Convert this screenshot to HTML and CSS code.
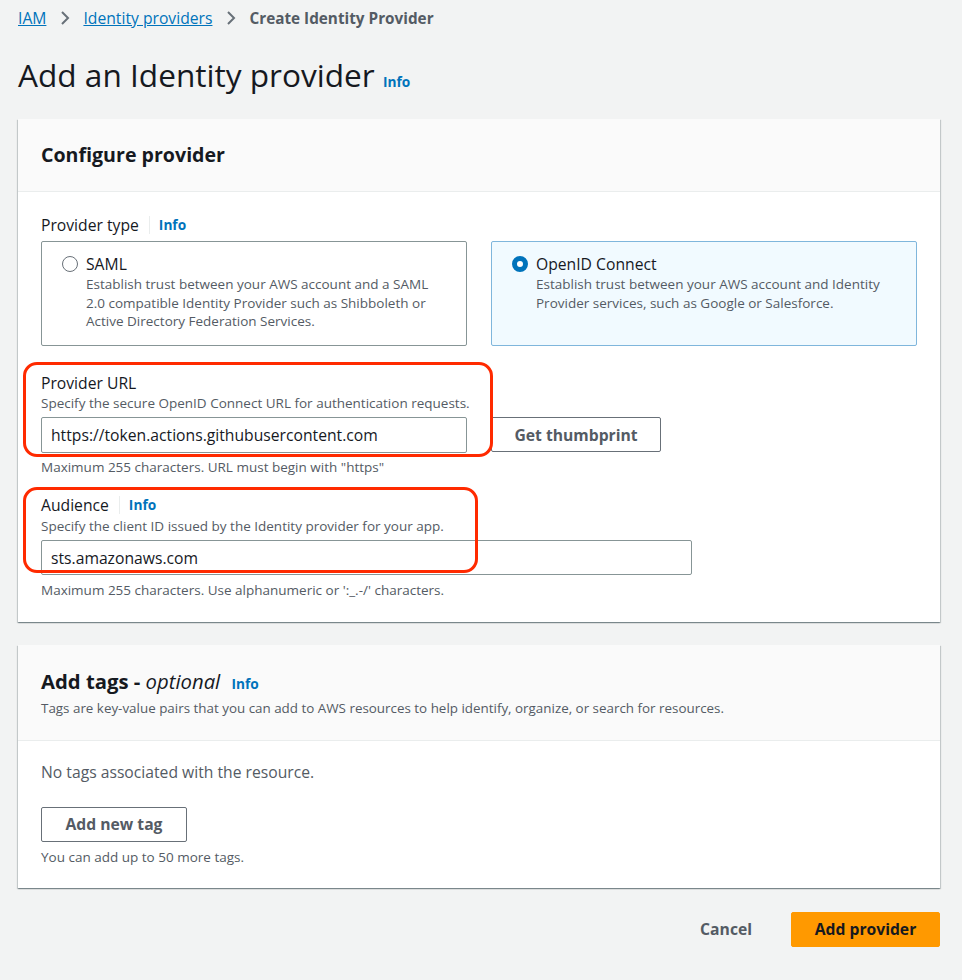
FILE: index.html
```html
<!DOCTYPE html>
<html lang="en">
<head>
<meta charset="utf-8">
<title>Create Identity Provider</title>
<link rel="stylesheet" href="styles.css">
</head>
<body>
<div class="page">
  <nav class="breadcrumb">
    <a href="#">IAM</a>
    <svg class="crumb-sep" viewBox="0 0 10 16" aria-hidden="true"><polyline points="2,2 8,8 2,14" fill="none" stroke="#687078" stroke-width="2"/></svg>
    <a href="#">Identity providers</a>
    <svg class="crumb-sep" viewBox="0 0 10 16" aria-hidden="true"><polyline points="2,2 8,8 2,14" fill="none" stroke="#687078" stroke-width="2"/></svg>
    <span class="crumb-current">Create Identity Provider</span>
  </nav>

  <h1 class="page-title">Add an Identity provider <a class="info title-info" href="#">Info</a></h1>

  <section class="card">
    <div class="card-header">
      <h2 class="card-title">Configure provider</h2>
    </div>
    <div class="card-body">
      <div class="label-row">
        <span class="label">Provider type</span>
        <span class="divider"></span>
        <a class="info" href="#">Info</a>
      </div>
      <div class="tiles">
        <div class="tile">
          <span class="radio"></span>
          <span class="tile-label">SAML</span>
          <span class="tile-desc">Establish trust between your AWS account and a SAML 2.0 compatible Identity Provider such as Shibboleth or Active Directory Federation Services.</span>
        </div>
        <div class="tile tile-selected">
          <span class="radio radio-checked"></span>
          <span class="tile-label">OpenID Connect</span>
          <span class="tile-desc">Establish trust between your AWS account and Identity Provider services, such as Google or Salesforce.</span>
        </div>
      </div>

      <div class="field field-url">
        <div class="label-row"><span class="label">Provider URL</span></div>
        <div class="field-desc">Specify the secure OpenID Connect URL for authentication requests.</div>
        <div class="input-row">
          <div class="input input-url">https://token.actions.githubusercontent.com</div>
          <button class="btn btn-normal btn-thumb" type="button">Get thumbprint</button>
        </div>
        <div class="hint">Maximum 255 characters. URL must begin with "https"</div>
        <span class="annot annot-url"></span>
      </div>

      <div class="field field-aud">
        <div class="label-row">
          <span class="label">Audience</span>
          <span class="divider"></span>
          <a class="info" href="#">Info</a>
        </div>
        <div class="field-desc">Specify the client ID issued by the Identity provider for your app.</div>
        <div class="input-row">
          <div class="input input-aud">sts.amazonaws.com</div>
        </div>
        <div class="hint">Maximum 255 characters. Use alphanumeric or ':_.-/' characters.</div>
        <span class="annot annot-aud"></span>
      </div>
    </div>
  </section>

  <section class="card card-tags">
    <div class="card-header tags-header">
      <h2 class="card-title tags-title">Add tags - <em>optional</em> <a class="info tags-info" href="#">Info</a></h2>
      <div class="tags-desc">Tags are key-value pairs that you can add to AWS resources to help identify, organize, or search for resources.</div>
    </div>
    <div class="card-body tags-body">
      <div class="empty">No tags associated with the resource.</div>
      <button class="btn btn-normal btn-addtag" type="button">Add new tag</button>
      <div class="hint hint-tags">You can add up to 50 more tags.</div>
    </div>
  </section>

  <div class="actions">
    <button class="btn btn-link" type="button">Cancel</button>
    <button class="btn btn-primary" type="button">Add provider</button>
  </div>
</div>
</body>
</html>
```

FILE: styles.css
```css
* { box-sizing: border-box; }

body {
  margin: 0;
  background: #f2f3f3;
  font-family: "Open Sans", "Noto Sans", sans-serif;
  color: #16191f;
  font-size: 15.7px;
}

.page {
  padding: 0 22px 0 18px;
}

.breadcrumb {
  display: flex;
  align-items: center;
  height: 20px;
  margin-top: 8px;
  line-height: 20px;
  font-size: 15.7px;
}
.breadcrumb a { color: #0073bb; text-decoration: underline; }
.crumb-sep { width: 10px; height: 16px; margin: 0 13px 0 14px; }
.crumb-current { color: #545b64; font-weight: 700; font-size: 15.3px; }

.page-title {
  margin: 27px 0 24px;
  font-size: 31.6px;
  line-height: 40px;
  height: 40px;
  font-weight: 400;
}

.info {
  color: #0073bb;
  font-weight: 700;
  font-size: 13.7px;
  line-height: 1;
  text-decoration: none;
}
.title-info { margin-left: 0; }

.card {
  position: relative;
  background: #fff;
  box-shadow: 0 1px 1px 0 rgba(0,28,36,0.3), 1px 1px 1px 0 rgba(0,28,36,0.15), -1px 1px 1px 0 rgba(0,28,36,0.15);
}

.card-header {
  background: #fafafa;
  border-bottom: 1px solid #eaeded;
  padding: 24px 23px 24px;
}

.card-title {
  margin: 0;
  font-size: 19.6px;
  line-height: 24px;
  font-weight: 700;
}

.card-body {
  padding: 22px 23px 23px;
}

.label-row {
  display: flex;
  align-items: center;
  height: 22px;
  line-height: 22px;
}
.label { font-size: 15.7px; }
.divider {
  width: 1px;
  height: 18px;
  background: #eaeded;
  margin: 0 9px 0 10px;
}

.tiles {
  display: grid;
  grid-template-columns: 1fr 1fr;
  gap: 24px;
  margin-top: 5px;
}

.tile {
  display: grid;
  grid-template-columns: 16px 1fr;
  column-gap: 8px;
  height: 105px;
  padding: 11px 20px 13px;
  border: 1px solid #879596;
  border-radius: 2px;
  align-content: start;
}
.tile-selected {
  background: #f1faff;
  border-color: #7fb6dc;
}

.radio {
  grid-column: 1;
  grid-row: 1;
  align-self: center;
  width: 16px;
  height: 16px;
  border-radius: 50%;
  border: 1.5px solid #687078;
  background: #fff;
}
.radio-checked {
  border: 5px solid #0073bb;
}

.tile-label {
  grid-column: 2;
  grid-row: 1;
  font-size: 15.7px;
  line-height: 22px;
}
.tile-desc {
  grid-column: 2;
  grid-row: 2;
  font-size: 13.5px;
  line-height: 18.5px;
  color: #545b64;
}

.field { position: relative; }
.field-url { margin-top: 26px; }
.field-aud { margin-top: 18px; }

.field-desc {
  margin-top: 0;
  font-size: 13.5px;
  line-height: 18.5px;
  color: #545b64;
}
.field-aud .field-desc { margin-top: 1px; }

.input-row {
  display: flex;
  gap: 24px;
  margin-top: 4.5px;
}

.input {
  display: flex;
  align-items: center;
  height: 36px;
  padding: 0 9px;
  border: 1px solid #879596;
  border-radius: 2px;
  background: #fff;
  font-size: 15.7px;
}
.input-url { width: 426px; }
.input-aud { width: 651px; height: 35px; }

.hint {
  margin-top: 5px;
  font-size: 13.5px;
  line-height: 18px;
  color: #545b64;
}
.field-aud .hint { margin-top: 6px; }

.btn {
  font-family: "Open Sans", "Noto Sans", sans-serif;
  font-weight: 700;
  font-size: 15.7px;
  border-radius: 2px;
  cursor: pointer;
}
.btn-normal {
  height: 35px;
  background: #fff;
  color: #545b64;
  border: 1px solid #687078;
  padding: 0 20px;
}
.btn-thumb { width: 170px; }
.btn-addtag { width: 146px; margin-top: 24px; display: block; }

.annot {
  position: absolute;
  left: -18px;
  border: 3px solid #ff2a00;
  border-radius: 14px;
  pointer-events: none;
}
.annot-url { top: -10px; width: 470px; height: 95px; }
.annot-aud { top: -7px; width: 455px; height: 86px; }

.card-tags { margin-top: 23px; }
.tags-header { padding: 24px 23px 22px; }
.tags-title { font-size: 20.3px; }
.tags-title em { font-weight: 400; }
.tags-info { margin-left: 6px; }
.tags-desc {
  margin-top: 6px;
  font-size: 13.4px;
  line-height: 18.5px;
  color: #545b64;
}
.tags-body { padding: 20px 23px 22px; }
.empty {
  font-size: 15.7px;
  line-height: 22px;
  color: #545b64;
}
.hint-tags { margin-top: 6px; }

.actions {
  display: flex;
  justify-content: flex-end;
  align-items: center;
  gap: 19px;
  margin-top: 24px;
}
.btn-link {
  height: 35px;
  background: transparent;
  border: none;
  color: #545b64;
  padding: 0 20px;
}
.btn-primary {
  height: 35px;
  width: 149px;
  background: #ff9900;
  border: 1px solid #ff9900;
  color: #16191f;
  padding: 0 20px;
}
```
